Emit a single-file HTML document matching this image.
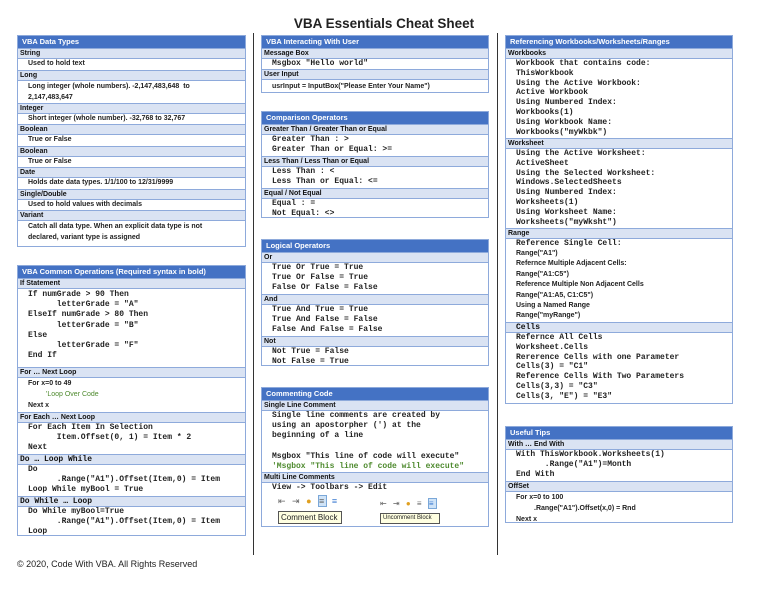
<!DOCTYPE html>
<html><head><meta charset="utf-8"><style>
*{margin:0;padding:0;box-sizing:border-box}
body{width:768px;height:594px;background:#fff;position:relative;overflow:hidden;font-family:"Liberation Sans",sans-serif;color:#111}
.title{position:absolute;left:0;width:768px;top:16px;text-align:center;font-size:13.5px;font-weight:bold;color:#222}
.vl{position:absolute;top:33px;width:1px;height:522px;background:#333}
.box{position:absolute;border:1px solid #8eaadb;background:#fff}
.h{background:#4472c4;color:#fff;font-size:7.5px;font-weight:bold;height:12px;line-height:12px;padding-left:4px}
.s{background:#dae3f3;border-top:1px solid #8eaadb;border-bottom:1px solid #8eaadb;font-size:7px;font-weight:bold;height:11px;line-height:9px;padding-left:2px}
.t{font-size:7px;line-height:10.5px;padding-left:10px;font-weight:bold;color:#222}
.c{font-family:"Liberation Mono",monospace;font-size:8px;line-height:10.2px;padding-left:10px;white-space:pre;color:#222;font-weight:bold}
.g{color:#4e8a2e}
.foot{position:absolute;left:17px;top:559px;font-size:9px;color:#222}
</style></head><body>
<div class="title">VBA Essentials Cheat Sheet</div>
<div class="vl" style="left:253px"></div>
<div class="vl" style="left:497px"></div>

<div class="box" style="left:17px;top:35px;width:229px;height:212px">
<div class="h">VBA Data Types</div>
<div class="s">String</div><div class="t">Used to hold text</div>
<div class="s">Long</div><div class="t" style="line-height:11px">Long integer (whole numbers). -2,147,483,648 &nbsp;to<br>2,147,483,647</div>
<div class="s">Integer</div><div class="t">Short integer (whole number). -32,768 to 32,767</div>
<div class="s">Boolean</div><div class="t">True or False</div>
<div class="s">Boolean</div><div class="t">True or False</div>
<div class="s">Date</div><div class="t">Holds date data types. 1/1/100 to 12/31/9999</div>
<div class="s">Single/Double</div><div class="t">Used to hold values with decimals</div>
<div class="s">Variant</div><div class="t" style="line-height:11px">Catch all data type. When an explicit data type is not<br>declared, variant type is assigned</div>
</div>

<div class="box" style="left:17px;top:265px;width:229px;height:271px">
<div class="h">VBA Common Operations (Required syntax in bold)</div>
<div class="s">If Statement</div>
<div class="c" style="height:78px;padding-top:1px">If numGrade &gt; 90 Then
      letterGrade = "A"
ElseIf numGrade &gt; 80 Then
      letterGrade = "B"
Else
      letterGrade = "F"
End If</div>
<div class="s">For … Next Loop</div>
<div class="t" style="height:34px;line-height:11px">For x=0 to 49<br><span class="g" style="padding-left:18px;font-weight:normal">'Loop Over Code</span><br>Next x</div>
<div class="s">For Each … Next Loop</div>
<div class="c" style="height:31px">For Each Item In Selection
      Item.Offset(0, 1) = Item * 2
Next</div>
<div class="s" style="font-family:'Liberation Mono',monospace;font-size:8px">Do … Loop While</div>
<div class="c" style="height:31px">Do
      .Range("A1").Offset(Item,0) = Item
Loop While myBool = True</div>
<div class="s" style="font-family:'Liberation Mono',monospace;font-size:8px">Do While … Loop</div>
<div class="c" style="height:31px">Do While myBool=True
      .Range("A1").Offset(Item,0) = Item
Loop</div>
</div>

<div class="box" style="left:261px;top:35px;width:228px;height:58px">
<div class="h">VBA Interacting With User</div>
<div class="s">Message Box</div><div class="c">Msgbox "Hello world"</div>
<div class="s">User Input</div><div class="t" style="line-height:13px">usrInput = InputBox("Please Enter Your Name")</div>
</div>

<div class="box" style="left:261px;top:111px;width:228px;height:107px">
<div class="h">Comparison Operators</div>
<div class="s">Greater Than / Greater Than or Equal</div>
<div class="c" style="height:21px">Greater Than : &gt;
Greater Than or Equal: &gt;=</div>
<div class="s">Less Than / Less Than or Equal</div>
<div class="c" style="height:21px">Less Than : &lt;
Less Than or Equal: &lt;=</div>
<div class="s">Equal / Not Equal</div>
<div class="c" style="height:21px">Equal : =
Not Equal: &lt;&gt;</div>
</div>

<div class="box" style="left:261px;top:239px;width:228px;height:127px">
<div class="h">Logical Operators</div>
<div class="s">Or</div>
<div class="c" style="height:31px">True Or True = True
True Or False = True
False Or False = False</div>
<div class="s">And</div>
<div class="c" style="height:31px">True And True = True
True And False = False
False And False = False</div>
<div class="s">Not</div>
<div class="c" style="height:21px">Not True = False
Not False = True</div>
</div>

<div class="box" style="left:261px;top:387px;width:228px;height:140px">
<div class="h">Commenting Code</div>
<div class="s">Single Line Comment</div>
<div class="c" style="height:61px">Single line comments are created by
using an apostorpher (') at the
beginning of a line

Msgbox "This line of code will execute"
<span class="g">'Msgbox "This line of code will execute"</span></div>
<div class="s">Multi Line Comments</div>
<div class="c">View -&gt; Toolbars -&gt; Edit</div>
<div style="position:relative;height:35px">
<div style="position:absolute;left:16px;top:3px;width:82px;height:13px;font-size:9px;color:#666;letter-spacing:2px">⇤ ⇥ <span style="color:#e0a020">●</span> <span style="background:#cfe3f7;border:1px solid #7aa7d8">≡</span> <span style="color:#3a7ad0">≡</span></div>
<div style="position:absolute;left:16px;top:18px;width:64px;height:13px;background:#ffffe1;border:1px solid #555;font-size:8px;line-height:11px;padding-left:2px;color:#222">Comment Block</div>
<div style="position:absolute;left:118px;top:6px;width:64px;height:11px;font-size:8px;color:#666;letter-spacing:2px">⇤ ⇥ <span style="color:#e0a020">●</span> ≡ <span style="background:#cfe3f7;border:1px solid #7aa7d8;color:#3a7ad0">≡</span></div>
<div style="position:absolute;left:118px;top:20px;width:60px;height:11px;background:#ffffe1;border:1px solid #555;font-size:6px;line-height:9px;padding-left:2px;color:#222">Uncomment Block</div>
</div>
</div>

<div class="box" style="left:505px;top:35px;width:228px;height:369px">
<div class="h">Referencing Workbooks/Worksheets/Ranges</div>
<div class="s">Workbooks</div>
<div class="c" style="height:79px;line-height:9.8px">Workbook that contains code:
ThisWorkbook
Using the Active Workbook:
Active Workbook
Using Numbered Index:
Workbooks(1)
Using Workbook Name:
Workbooks("myWkbk")</div>
<div class="s">Worksheet</div>
<div class="c" style="height:79px;line-height:9.8px">Using the Active Worksheet:
ActiveSheet
Using the Selected Worksheet:
Windows.SelectedSheets
Using Numbered Index:
Worksheets(1)
Using Worksheet Name:
Worksheets("myWksht")</div>
<div class="s">Range</div>
<div class="c" style="height:10px;line-height:10px">Reference Single Cell:</div>
<div class="t" style="line-height:10.4px;height:73px">Range("A1")<br>Refernce Multiple Adjacent Cells:<br>Range("A1:C5")<br>Reference Multiple Non Adjacent Cells<br>Range("A1:A5, C1:C5")<br>Using a Named Range<br>Range("myRange")</div>
<div class="s" style="font-family:'Liberation Mono',monospace;font-size:8px;padding-left:10px">Cells</div>
<div class="c" style="line-height:9.8px">Refernce All Cells
Worksheet.Cells
Rererence Cells with one Parameter
Cells(3) = "C1"
Reference Cells With Two Parameters
Cells(3,3) = "C3"
Cells(3, "E") = "E3"</div>
</div>

<div class="box" style="left:505px;top:426px;width:228px;height:97px">
<div class="h">Useful Tips</div>
<div class="s">With … End With</div>
<div class="c" style="height:31px">With ThisWorkbook.Worksheets(1)
      .Range("A1")=Month
End With</div>
<div class="s">OffSet</div>
<div class="t" style="line-height:11px">For x=0 to 100<br><span style="padding-left:18px">.Range("A1").Offset(x,0) = Rnd</span><br>Next x</div>
</div>

<div class="foot">© 2020, Code With VBA. All Rights Reserved</div>
</body></html>
